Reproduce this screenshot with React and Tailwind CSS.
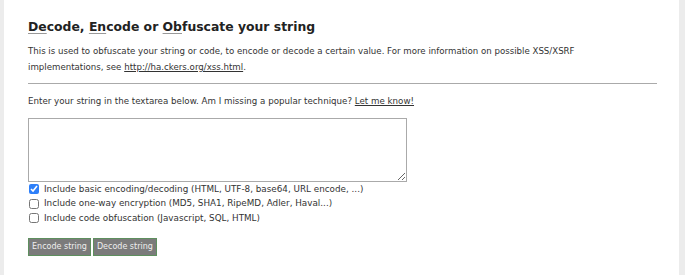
export default function App() {
  return (
    <div className="flex h-[275px] w-[685px] bg-white font-['DejaVu_Sans',sans-serif] text-[#333]">
      <div className="w-[4px] shrink-0 bg-[#ececec]" />
      <div className="flex-1 pl-[24px] pr-[22px] pt-[17px]">
        <h1 className="text-[12.4px] font-bold leading-[20px] text-[#222]">
          <span className="underline decoration-[#999] underline-offset-2">De</span>code,{' '}
          <span className="underline decoration-[#999] underline-offset-2">En</span>code or{' '}
          <span className="underline decoration-[#999] underline-offset-2">Ob</span>fuscate your string
        </h1>
        <p className="mt-[6px] text-[8.65px] leading-[16px]">
          This is used to obfuscate your string or code, to encode or decode a certain value. For more information on possible XSS/XSRF
          <br />
          implementations, see <a href="#" className="underline">http://ha.ckers.org/xss.html</a>.
        </p>
        <hr className="mt-[8px] border-t border-[#aaa]" />
        <p className="mt-[9px] text-[8.7px] leading-[16px]">
          Enter your string in the textarea below. Am I missing a popular technique? <a href="#" className="underline">Let me know!</a>
        </p>
        <textarea className="mt-[9px] block h-[64px] w-[379px] border border-[#aaa] bg-white" />
        <div className="flex flex-col text-[8.8px]">
          {[
            ['Include basic encoding/decoding (HTML, UTF-8, base64, URL encode, ...)', true],
            ['Include one-way encryption (MD5, SHA1, RipeMD, Adler, Haval...)', false],
            ['Include code obfuscation (Javascript, SQL, HTML)', false],
          ].map(([label, checked]) => (
            <label key={label} className="flex h-[14.5px] items-center gap-[5px]">
              <input type="checkbox" defaultChecked={checked} className="m-0 ml-[1px] h-[10px] w-[10px] accent-[#2d7ff9]" />
              <span>{label}</span>
            </label>
          ))}
        </div>
        <div className="mt-[12px] flex gap-[2px]">
          <button className="h-[18px] border border-[#5e8f5e] bg-[#7b7b7b] px-[3px] text-[8px] text-[#eee]">Encode string</button>
          <button className="h-[18px] border border-[#5e8f5e] bg-[#7b7b7b] px-[3px] text-[8px] text-[#eee]">Decode string</button>
        </div>
      </div>
      <div className="w-[6px] shrink-0 bg-[#ececec]" />
    </div>
  );
}
